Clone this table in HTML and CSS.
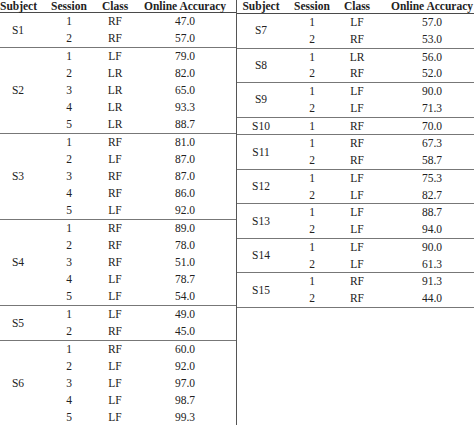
FILE: index.html
```html
<!DOCTYPE html>
<html>
<head>
<meta charset="utf-8">
<link rel="stylesheet" href="styles.css">
</head>
<body>
<div class="page">
  <div class="table left">
    <div class="head">
      <span>Subject</span><span>Session</span><span class="c3">Class</span><span>Online Accuracy</span>
    </div>
    <div class="group">
      <span class="subj s2">S1</span>
      <span>1</span><span class="c3">RF</span><span>47.0</span>
      <span>2</span><span class="c3">RF</span><span>57.0</span>
    </div>
    <div class="group">
      <span class="subj s5">S2</span>
      <span>1</span><span class="c3">LF</span><span>79.0</span>
      <span>2</span><span class="c3">LR</span><span>82.0</span>
      <span>3</span><span class="c3">LR</span><span>65.0</span>
      <span>4</span><span class="c3">LR</span><span>93.3</span>
      <span>5</span><span class="c3">LR</span><span>88.7</span>
    </div>
    <div class="group">
      <span class="subj s5">S3</span>
      <span>1</span><span class="c3">RF</span><span>81.0</span>
      <span>2</span><span class="c3">LF</span><span>87.0</span>
      <span>3</span><span class="c3">RF</span><span>87.0</span>
      <span>4</span><span class="c3">RF</span><span>86.0</span>
      <span>5</span><span class="c3">LF</span><span>92.0</span>
    </div>
    <div class="group">
      <span class="subj s5">S4</span>
      <span>1</span><span class="c3">RF</span><span>89.0</span>
      <span>2</span><span class="c3">RF</span><span>78.0</span>
      <span>3</span><span class="c3">RF</span><span>51.0</span>
      <span>4</span><span class="c3">LF</span><span>78.7</span>
      <span>5</span><span class="c3">LF</span><span>54.0</span>
    </div>
    <div class="group">
      <span class="subj s2">S5</span>
      <span>1</span><span class="c3">LF</span><span>49.0</span>
      <span>2</span><span class="c3">RF</span><span>45.0</span>
    </div>
    <div class="group last">
      <span class="subj s5">S6</span>
      <span>1</span><span class="c3">RF</span><span>60.0</span>
      <span>2</span><span class="c3">LF</span><span>92.0</span>
      <span>3</span><span class="c3">LF</span><span>97.0</span>
      <span>4</span><span class="c3">LF</span><span>98.7</span>
      <span>5</span><span class="c3">LF</span><span>99.3</span>
    </div>
  </div>
  <div class="table right">
    <div class="head">
      <span>Subject</span><span>Session</span><span>Class</span><span>Online Accuracy</span>
    </div>
    <div class="group">
      <span class="subj s2">S7</span>
      <span>1</span><span>LF</span><span>57.0</span>
      <span>2</span><span>RF</span><span>53.0</span>
    </div>
    <div class="group">
      <span class="subj s2">S8</span>
      <span>1</span><span>LR</span><span>56.0</span>
      <span>2</span><span>RF</span><span>52.0</span>
    </div>
    <div class="group">
      <span class="subj s2">S9</span>
      <span>1</span><span>LF</span><span>90.0</span>
      <span>2</span><span>LF</span><span>71.3</span>
    </div>
    <div class="group">
      <span class="subj s1">S10</span>
      <span>1</span><span>RF</span><span>70.0</span>
    </div>
    <div class="group">
      <span class="subj s2">S11</span>
      <span>1</span><span>RF</span><span>67.3</span>
      <span>2</span><span>RF</span><span>58.7</span>
    </div>
    <div class="group">
      <span class="subj s2">S12</span>
      <span>1</span><span>LF</span><span>75.3</span>
      <span>2</span><span>LF</span><span>82.7</span>
    </div>
    <div class="group">
      <span class="subj s2">S13</span>
      <span>1</span><span>LF</span><span>88.7</span>
      <span>2</span><span>LF</span><span>94.0</span>
    </div>
    <div class="group">
      <span class="subj s2">S14</span>
      <span>1</span><span>LF</span><span>90.0</span>
      <span>2</span><span>LF</span><span>61.3</span>
    </div>
    <div class="group">
      <span class="subj s2">S15</span>
      <span>1</span><span>RF</span><span>91.3</span>
      <span>2</span><span>RF</span><span>44.0</span>
    </div>
  </div>
</div>
</body>
</html>
```
FILE: styles.css
```css
html, body {
  margin: 0;
  padding: 0;
  background: #fff;
  overflow: hidden;
}
body {
  width: 474px;
  height: 425px;
  font-family: "Liberation Serif", "DejaVu Serif", serif;
  font-size: 11.5px;
  color: #222;
}
.page {
  display: flex;
  height: 425px;
  overflow: hidden;
}
.table {
  display: flex;
  flex-direction: column;
  flex: none;
}
.left {
  width: 236px;
  border-right: 1px solid #555;
}
.right {
  width: 252px;
}
.head, .group {
  display: grid;
  text-align: center;
  white-space: nowrap;
}
.left .head, .left .group {
  grid-template-columns: 36px 66px 32px 102px;
}
.right .head, .right .group {
  grid-template-columns: 48px 54px 36px 114px;
}
.left .c3 {
  padding-right: 6px;
}
.head {
  height: 13px;
  line-height: 12px;
  font-weight: bold;
  border-bottom: 1.5px solid #4a4a4a;
}
.group {
  border-bottom: 1px solid #777;
}
.left .group {
  grid-auto-rows: 17px;
  line-height: 17px;
}
.right .group {
  grid-auto-rows: 16.75px;
  line-height: 16.75px;
}
.group.last {
  border-bottom: none;
}
.subj {
  grid-column: 1;
  align-self: center;
}
.s1 { grid-row: 1 / span 1; }
.s2 { grid-row: 1 / span 2; }
.s5 { grid-row: 1 / span 5; }
```
